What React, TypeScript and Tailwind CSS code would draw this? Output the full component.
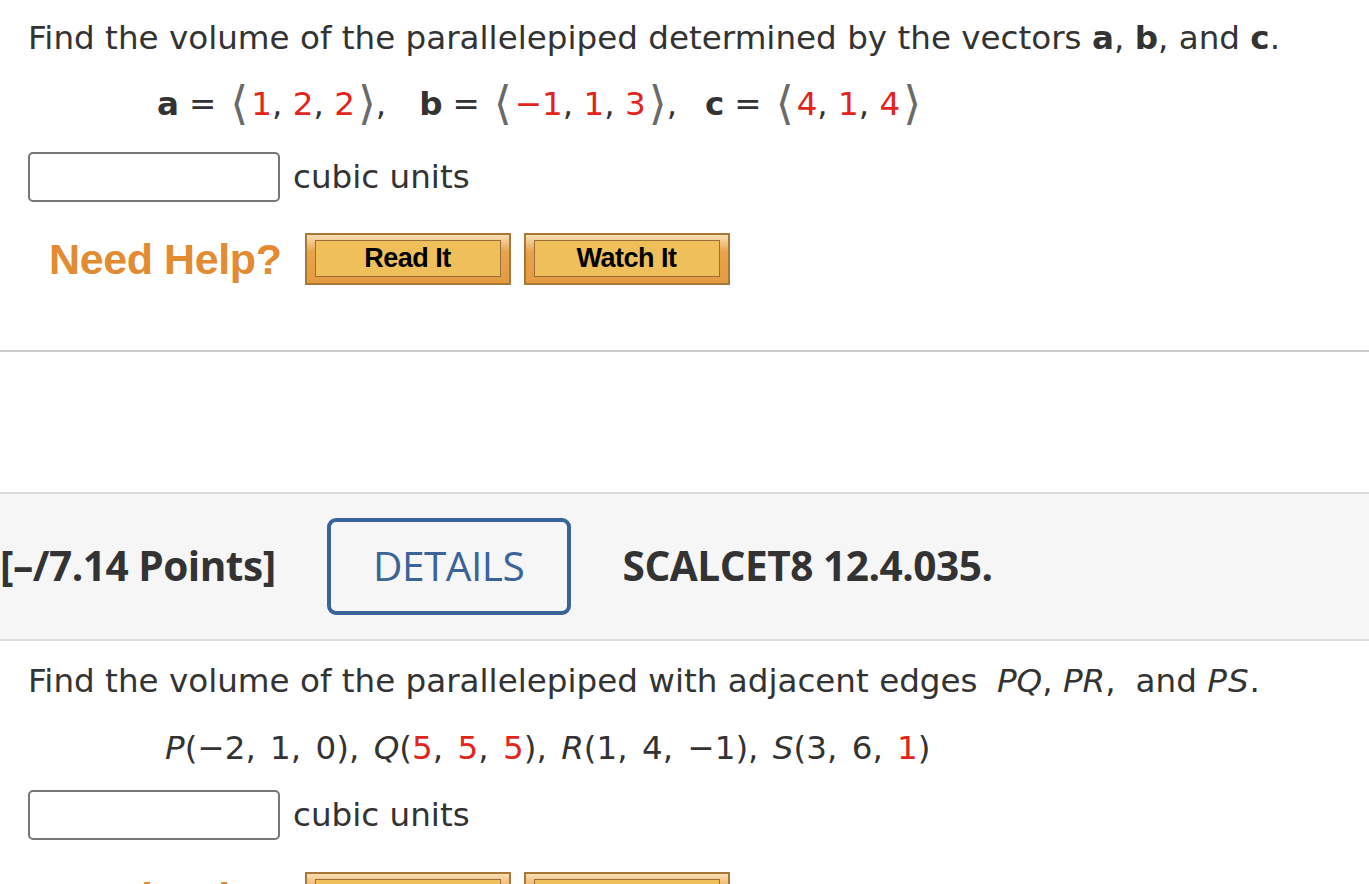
import React from "react";

const Red = ({ children }: { children: React.ReactNode }) => (
  <span className="text-[#e3241b]">{children}</span>
);

const LB = () => (
  <span className="relative top-[4px] mr-[3px] text-[46px] leading-[0] text-[#6a6a6a] font-['DejaVu_Sans',sans-serif]">⟨</span>
);
const RB = () => (
  <span className="relative top-[4px] ml-[3px] text-[46px] leading-[0] text-[#6a6a6a] font-['DejaVu_Sans',sans-serif]">⟩</span>
);

function HelpBtn({ label }: { label: string }) {
  return (
    <div className="w-[206px] h-[52px] border-2 border-[#a8783a] bg-[linear-gradient(180deg,#f8dfb5,#e8a34c_35%,#e49c42)] pl-[8px] pr-[8px] pt-[5px] pb-[6px]">
      <div className="h-full border border-[#9c6f3a] bg-[#eebf5a] flex items-center justify-center font-bold text-[27px] text-black tracking-[-0.5px] font-['Liberation_Sans',Arial,sans-serif]">
        {label}
      </div>
    </div>
  );
}

function NeedHelp() {
  return (
    <div className="flex items-center pl-[21px] h-[52px]">
      <span className="font-bold text-[43px] text-[#e38b30] font-['Liberation_Sans',Arial,sans-serif] tracking-[-0.4px] mr-[23px] whitespace-nowrap">
        Need Help?
      </span>
      <HelpBtn label="Read It" />
      <div className="w-[13px]" />
      <HelpBtn label="Watch It" />
    </div>
  );
}

function AnswerRow() {
  return (
    <div className="flex items-center h-[50px]">
      <div className="w-[252px] h-[50px] border-2 border-[#767676] rounded-[5px] bg-white" />
      <span className="ml-[13px] leading-[40px]">cubic units</span>
    </div>
  );
}

export default function App() {
  return (
    <div className="w-[1369px] h-[884px] bg-white text-[#333333] text-[32.6px] font-['DejaVu_Sans',Verdana,sans-serif] overflow-hidden">
      {/* Question 1 */}
      <div className="pl-[28px] pt-[18px]">
        <div className="leading-[40px] whitespace-nowrap">
          Find the volume of the parallelepiped determined by the vectors <b>a</b>, <b>b</b>, and <b>c</b>.
        </div>
        <div className="mt-[26px] ml-[129px] leading-[40px] whitespace-nowrap">
          <b>a</b>
          <span className="ml-[10px]">=</span>
          <span className="ml-[14px]"><LB /></span>
          <Red>1</Red>, <Red>2</Red>, <Red>2</Red>
          <RB />,
          <span className="ml-[33px]"><b>b</b></span>
          <span className="ml-[10px]">=</span>
          <span className="ml-[14px]"><LB /></span>
          <Red>−1</Red>, <Red>1</Red>, <Red>3</Red>
          <RB />,
          <span className="ml-[28px]"><b>c</b></span>
          <span className="ml-[10px]">=</span>
          <span className="ml-[14px]"><LB /></span>
          <Red>4</Red>, <Red>1</Red>, <Red>4</Red>
          <RB />
        </div>
        <div className="mt-[28px]">
          <AnswerRow />
        </div>
        <div className="mt-[31px]">
          <NeedHelp />
        </div>
      </div>
      <div className="mt-[65px] h-[2px] bg-[#cccccc]" />

      {/* Question 2 header */}
      <div className="mt-[140px] h-[149px] border-t-2 border-b-2 border-[#dddddd] bg-[#f6f6f6] flex items-center font-['Open_Sans',sans-serif] text-[40.6px] text-[#333333]">
        <span className="font-bold tracking-[-0.5px] whitespace-nowrap">[–/7.14 Points]</span>
        <div className="ml-[51px] w-[244px] h-[97px] border-4 border-[#3a6497] rounded-[9px] flex items-center justify-center text-[#3a6497] tracking-[-0.5px]">
          DETAILS
        </div>
        <span className="ml-[52px] font-bold tracking-[-0.5px] whitespace-nowrap">SCALCET8 12.4.035.</span>
      </div>

      {/* Question 2 */}
      <div className="pl-[28px] pt-[20px]">
        <div className="leading-[40px] whitespace-nowrap">
          Find the volume of the parallelepiped with adjacent edges <span className="ml-[9px] italic">PQ</span>, <span className="italic">PR</span>,
          <span className="ml-[20px]">and </span><span className="italic tracking-[1px]">PS</span>.
        </div>
        <div className="mt-[27px] ml-[137px] leading-[40px] whitespace-nowrap [word-spacing:4px]">
          <span className="italic">P</span>(−2, 1, 0), <span className="italic">Q</span>(<Red>5</Red>, <Red>5</Red>, <Red>5</Red>), <span className="italic">R</span>(1, 4, −1), <span className="italic">S</span>(3, 6, <Red>1</Red>)
        </div>
        <div className="mt-[22px]">
          <AnswerRow />
        </div>
        <div className="mt-[32px]">
          <NeedHelp />
        </div>
      </div>
    </div>
  );
}
